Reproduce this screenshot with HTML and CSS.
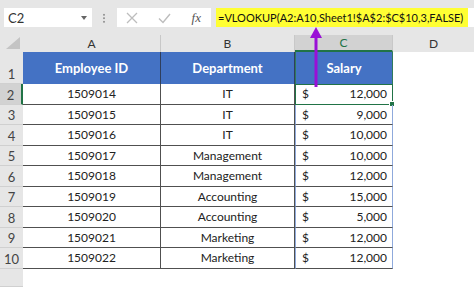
FILE: index.html
```html
<!DOCTYPE html>
<html>
	<head>
		<meta charset="UTF-8">
		<link rel="stylesheet" href="styles.css">
	</head>
	<body>
		<div class="toolbar">
			<div class="namebox">
				<span>C2</span>
				<svg class="caret" width="6" height="4" viewBox="0 0 6 4"><path d="M0 0h6L3 4z" fill="#666"/></svg>
			</div>
			<div class="grip"></div>
			<div class="buttons">
				<svg width="12" height="12" viewBox="0 0 12 12"><path d="M1 1l10 10M11 1L1 11" stroke="#bdbdbd" stroke-width="1.3"/></svg>
				<svg width="13" height="12" viewBox="0 0 13 12"><path d="M1 6.5l4 4L12 2" stroke="#bdbdbd" stroke-width="1.4" fill="none"/></svg>
				<span class="fx">fx</span>
			</div>
			<div class="formula"><span class="hl">=VLOOKUP(A2:A10,Sheet1!$A$2:$C$10,3,FALSE)</span></div>
		</div>

		<div class="sheet">
			<div class="corner"><svg width="14" height="12" viewBox="0 0 14 12"><path d="M14 0v12H0z" fill="#c4c4c4"/></svg></div>
			<div class="colhead">A</div>
			<div class="colhead">B</div>
			<div class="colhead sel">C</div>
			<div class="colhead last">D</div>

			<div class="rowhead">1</div>
			<div class="th">Employee ID</div>
			<div class="th">Department</div>
			<div class="th salhead">Salary</div>
			<div class="blank"></div>

			<div class="rowhead sel">2</div>
			<div class="td">1509014</div>
			<div class="td">IT</div>
			<div class="td money active"><span>$</span><span>12,000</span><i class="handle"></i></div>
			<div class="blank"></div>

			<div class="rowhead">3</div>
			<div class="td">1509015</div>
			<div class="td">IT</div>
			<div class="td money"><span>$</span><span>9,000</span></div>
			<div class="blank"></div>

			<div class="rowhead">4</div>
			<div class="td">1509016</div>
			<div class="td">IT</div>
			<div class="td money"><span>$</span><span>10,000</span></div>
			<div class="blank"></div>

			<div class="rowhead">5</div>
			<div class="td">1509017</div>
			<div class="td">Management</div>
			<div class="td money"><span>$</span><span>10,000</span></div>
			<div class="blank"></div>

			<div class="rowhead">6</div>
			<div class="td">1509018</div>
			<div class="td">Management</div>
			<div class="td money"><span>$</span><span>12,000</span></div>
			<div class="blank"></div>

			<div class="rowhead">7</div>
			<div class="td">1509019</div>
			<div class="td">Accounting</div>
			<div class="td money"><span>$</span><span>15,000</span></div>
			<div class="blank"></div>

			<div class="rowhead">8</div>
			<div class="td">1509020</div>
			<div class="td">Accounting</div>
			<div class="td money"><span>$</span><span>5,000</span></div>
			<div class="blank"></div>

			<div class="rowhead">9</div>
			<div class="td">1509021</div>
			<div class="td">Marketing</div>
			<div class="td money"><span>$</span><span>12,000</span></div>
			<div class="blank"></div>

			<div class="rowhead">10</div>
			<div class="td">1509022</div>
			<div class="td">Marketing</div>
			<div class="td money"><span>$</span><span>12,000</span></div>
			<div class="blank"></div>

			<div class="rowhead"></div>
			<div class="blank"></div>
			<div class="blank"></div>
			<div class="blank"></div>
			<div class="blank"></div>

			<svg class="arrow" width="14" height="62" viewBox="0 0 14 62">
				<path d="M7 8V60" stroke="#9a0fd6" stroke-width="3"/>
				<path d="M7 0L13 11H1z" fill="#9a0fd6"/>
			</svg>
		</div>
	</body>
</html>
```

FILE: styles.css
```css
body {
	margin: 0;
	width: 474px;
	height: 287px;
	overflow: hidden;
	background-color: #ffffff;
	font-family: 'Lato', 'Open Sans', sans-serif;
}

.toolbar {
	display: flex;
	align-items: center;
	height: 19px;
	padding: 8px 0 8px 4px;
	background-color: #e6e6e6;
}

.namebox {
	display: flex;
	align-items: center;
	justify-content: space-between;
	width: 79px;
	height: 19px;
	padding: 0 5px 0 4px;
	background-color: white;
	color: #333;
	font-size: 13px;
}

.grip {
	width: 2px;
	height: 10px;
	margin: 0 12px 0 11px;
	background-image: radial-gradient(circle, #9a9a9a 0.8px, transparent 1px);
	background-size: 2px 3.5px;
}

.buttons {
	display: flex;
	align-items: center;
	justify-content: space-between;
	width: 75px;
	height: 19px;
	padding: 0 10px 0 9px;
	background-color: white;
}

.fx {
	font-family: 'Liberation Serif', serif;
	font-style: italic;
	font-size: 13px;
	color: #555;
}

.formula {
	flex: 1;
	height: 19px;
	margin-left: 5px;
	background-color: white;
	font-size: 11px;
	line-height: 19px;
	white-space: nowrap;
	overflow: hidden;
}

.hl {
	display: inline-block;
	padding: 0 5px 0 2px;
	background-color: #ffff33;
	color: #111;
}

.sheet {
	position: relative;
	display: grid;
	grid-template-columns: 23px 138px 134px 98px 1fr;
	grid-template-rows: 17px 32px repeat(9, 20.5px) 1fr;
	height: 252px;
	background-color: white;
}

.corner {
	display: flex;
	align-items: flex-end;
	justify-content: flex-end;
	padding: 0 3px 3px 0;
	background-color: #e6e6e6;
}

.colhead {
	display: flex;
	align-items: center;
	justify-content: center;
	background-color: #e6e6e6;
	border-right: 1px solid #c8c8c8;
	color: #333;
	font-size: 12px;
}

.colhead.sel {
	background-color: #d2d2d2;
	border-bottom: 2px solid #217346;
	color: #217346;
}

.colhead.last {
	border-right: none;
}

.rowhead {
	display: flex;
	align-items: flex-end;
	justify-content: center;
	padding-bottom: 1px;
	background-color: #e6e6e6;
	border-bottom: 1px solid #d0d0d0;
	color: #444;
	font-size: 13px;
}

.rowhead.sel {
	background-color: #d2d2d2;
	border-right: 2px solid #217346;
}

.th {
	display: flex;
	align-items: center;
	justify-content: center;
	background-color: #4472c4;
	border-right: 1px solid #2f3e5c;
	color: white;
	font-weight: bold;
	font-size: 13px;
}

.salhead {
	border-left: 1px solid #2f7a5c;
	border-right: 1px solid #2f7a5c;
}

.td {
	display: flex;
	align-items: center;
	justify-content: center;
	border-right: 1px solid #505050;
	border-bottom: 1px solid #505050;
	color: #222;
	font-size: 12px;
}

.money {
	position: relative;
	justify-content: space-between;
	padding: 0 5px 0 6px;
	border-left: 1px solid #8faadc;
	border-right: 1px solid #8faadc;
}

.active {
	outline: 1.5px solid #217346;
	outline-offset: -1px;
}

.handle {
	position: absolute;
	right: -3px;
	bottom: -3px;
	width: 4px;
	height: 4px;
	background-color: #217346;
	border: 1px solid white;
}

.blank {
	background-color: white;
}

.arrow {
	position: absolute;
	left: 309px;
	top: -8px;
}
```
